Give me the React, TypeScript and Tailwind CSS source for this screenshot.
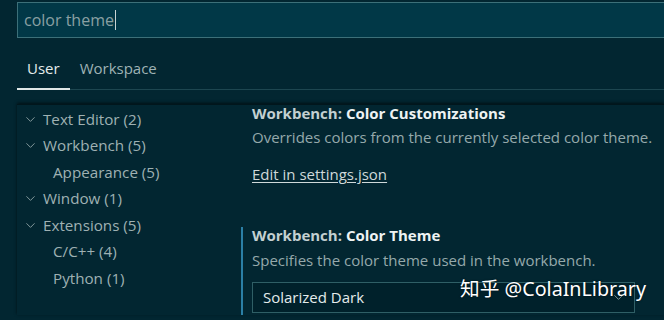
import { ChevronDown } from 'lucide-react'

const tree = [
  { label: 'Text Editor', count: 2, level: 0 },
  { label: 'Workbench', count: 5, level: 0 },
  { label: 'Appearance', count: 5, level: 1 },
  { label: 'Window', count: 1, level: 0 },
  { label: 'Extensions', count: 5, level: 0 },
  { label: 'C/C++', count: 4, level: 1 },
  { label: 'Python', count: 1, level: 1 },
]

export default function App() {
  return (
    <div className="relative w-[664px] h-[320px] overflow-hidden bg-[#022631] text-[#93a1a1] font-['Open_Sans',sans-serif]">
      {/* Search */}
      <div className="pt-[2px] pl-[17px]">
        <div className="flex items-center h-[36px] w-[700px] border border-[#3c7079] bg-[#013847] pl-[6px] text-[16px] text-[#8aa0a3]">
          <span>color theme</span>
          <span className="ml-[1px] w-px h-[20px] bg-[#c8d4d4]" />
        </div>
      </div>

      {/* Tabs */}
      <div className="mt-[17px] ml-[17px] flex items-end border-b border-[#1d4650] h-[35px] text-[15px]">
        <div className="relative px-[10px] pb-[10px] text-[#e4ecec]">
          User
          <div className="absolute left-0 right-0 bottom-[-1px] h-[2px] bg-[#dfe7e7]" />
        </div>
        <div className="pl-[10px] pb-[10px] text-[#9fb3b5]">Workspace</div>
      </div>

      {/* Body */}
      <div className="mt-[14px] ml-[17px] border-t border-[#01161c] shadow-[0_-1px_3px_rgba(0,0,0,0.6)] flex">
        <div className="w-[224px] pt-[1px] text-[15.2px] text-[#9fb1b3]">
          {tree.map((t) => (
            <div key={t.label} className="flex items-center h-[26.5px]">
              {t.level === 0 ? (
                <>
                  <ChevronDown className="ml-[6px] w-[15px] h-[15px] text-[#9fb1b3]" strokeWidth={1.3} />
                  <span className="ml-[5px]">{t.label} ({t.count})</span>
                </>
              ) : (
                <span className="ml-[36px]">{t.label} ({t.count})</span>
              )}
            </div>
          ))}
        </div>

        <div className="flex-1 min-w-0">
          {/* Setting 1 */}
          <div className="pl-[11px] h-[122px] whitespace-nowrap">
            <div className="text-[15px] font-bold text-[#c3d0d1] leading-[16px]">
              Workbench: <span className="text-[#eef3f3]">Color Customizations</span>
            </div>
            <div className="mt-[6px] text-[15px] leading-[20px] text-[#95a9ab]">
              Overrides colors from the currently selected color theme.
            </div>
            <div className="mt-[17px] text-[15px] leading-[20px] text-[#cfd9da] underline underline-offset-2">
              Edit in settings.json
            </div>
          </div>

          {/* Setting 2 */}
          <div className="border-l-2 border-[#2b7fa6] pl-[9px] h-[88px] whitespace-nowrap">
            <div className="text-[15px] font-bold leading-[16px] text-[#c3d0d1]">
              Workbench: <span className="text-[#eef3f3]">Color Theme</span>
            </div>
            <div className="mt-[7px] text-[15px] leading-[20px] text-[#95a9ab]">
              Specifies the color theme used in the workbench.
            </div>
            <div className="mt-[12px] flex items-center justify-between w-[383px] h-[31px] border border-[#2f5f66] bg-[#00212b] pl-[10px] pr-[8px] text-[15px] text-[#e4ecec]">
              <span>Solarized Dark</span>
              <ChevronDown className="w-[15px] h-[15px] text-[#9fb1b3]" strokeWidth={1.3} />
            </div>
          </div>
        </div>
      </div>

      {/* Watermark */}
      <div className="absolute left-[460px] top-[274px] text-[19.7px] text-white font-['Noto_Sans','Noto_Sans_CJK_SC',sans-serif] [text-shadow:0_0_2px_rgba(0,0,0,0.6)]">
        知乎 @ColaInLibrary
      </div>
    </div>
  )
}
